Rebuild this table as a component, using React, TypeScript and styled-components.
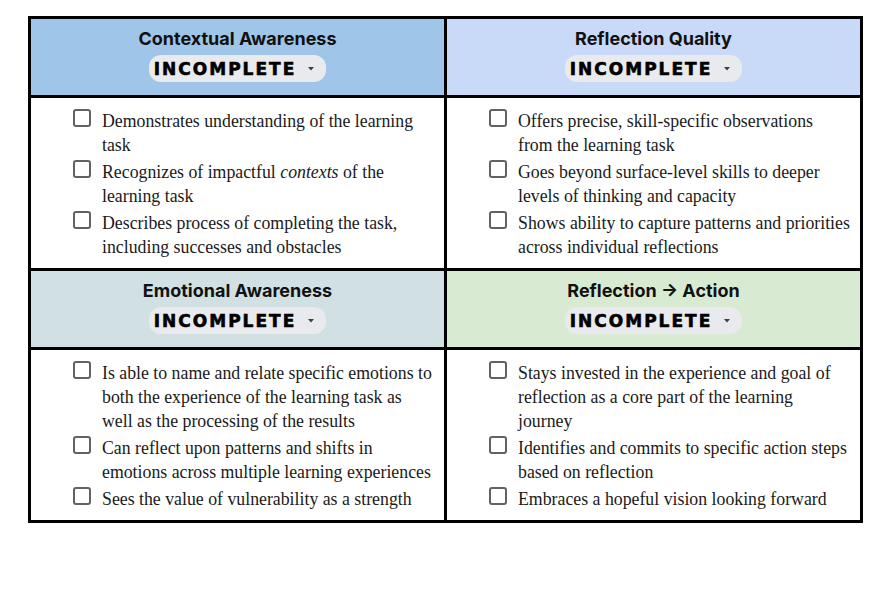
import React from "react";
import styled, { createGlobalStyle } from "styled-components";

const Global = createGlobalStyle`
  html, body { margin: 0; padding: 0; background: #ffffff; }
  body { font-family: "Liberation Serif", "Times New Roman", serif; }
`;

const Page = styled.div`
  padding: 16px 0 0 28px;
  width: 894px;
  height: 600px;
  box-sizing: border-box;
`;

const Grid = styled.div`
  display: grid;
  grid-template-columns: 413px 413px;
  gap: 3px;
  padding: 3px;
  background: #000000;
  width: 835px;
  box-sizing: border-box;
`;

const Header = styled.div<{ $bg: string }>`
  background: ${(p) => p.$bg};
  height: 76px;
  box-sizing: border-box;
  padding-top: 10px;
  display: flex;
  flex-direction: column;
  align-items: center;
  gap: 6px;
`;

const Title = styled.div`
  font-family: Inter, "Noto Sans", sans-serif;
  font-weight: 700;
  font-size: 18px;
  line-height: 20px;
  color: #111111;
`;

const Badge = styled.div`
  height: 27px;
  box-sizing: border-box;
  background: #e8eaed;
  border-radius: 12px;
  display: flex;
  align-items: center;
  padding: 0 12px 0 5px;
  gap: 12px;
`;

const BadgeText = styled.span`
  font-family: "DejaVu Sans", sans-serif;
  font-weight: 700;
  font-size: 17px;
  letter-spacing: 2px;
  color: #000000;
  -webkit-text-stroke: 0.6px #000;
`;

const Body = styled.div`
  background: #ffffff;
  padding: 11px 9px 9px 42px;
  display: flex;
  flex-direction: column;
  gap: 3px;
`;

const Item = styled.div`
  display: flex;
  align-items: flex-start;
  gap: 11px;
  font-size: 17.8px;
  line-height: 24px;
  color: #1a1a1a;
`;

const Box = styled.span`
  flex: 0 0 auto;
  width: 18px;
  height: 18px;
  box-sizing: border-box;
  border: 2px solid #5f6368;
  border-radius: 3px;
`;

const Text = styled.span`
  flex: 1;
`;

const Caret = () => (
  <svg width="6" height="4" viewBox="0 0 6 4">
    <path d="M0 0 L6 0 L3 3.5 Z" fill="#3c4043" />
  </svg>
);

type Section = { title: React.ReactNode; bg: string; items: React.ReactNode[] };

const top: Section[] = [
  {
    title: "Contextual Awareness",
    bg: "#9fc5e8",
    items: [
      "Demonstrates understanding of the learning task",
      <>
        Recognizes of impactful <i>contexts</i> of the learning task
      </>,
      "Describes process of completing the task, including successes and obstacles",
    ],
  },
  {
    title: "Reflection Quality",
    bg: "#c9daf8",
    items: [
      "Offers precise, skill-specific observations from the learning task",
      "Goes beyond surface-level skills to deeper levels of thinking and capacity",
      "Shows ability to capture patterns and priorities across individual reflections",
    ],
  },
];

const bottom: Section[] = [
  {
    title: "Emotional Awareness",
    bg: "#d0e0e3",
    items: [
      "Is able to name and relate specific emotions to both the experience of the learning task as well as the processing of the results",
      "Can reflect upon patterns and shifts in emotions across multiple learning experiences",
      "Sees the value of vulnerability as a strength",
    ],
  },
  {
    title: "Reflection \u2192 Action",
    bg: "#d9ead3",
    items: [
      "Stays invested in the experience and goal of reflection as a core part of the learning journey",
      "Identifies and commits to specific action steps based on reflection",
      "Embraces a hopeful vision looking forward",
    ],
  },
];

const HeaderCell = ({ s }: { s: Section }) => (
  <Header $bg={s.bg}>
    <Title>{s.title}</Title>
    <Badge>
      <BadgeText>INCOMPLETE</BadgeText>
      <Caret />
    </Badge>
  </Header>
);

const BodyCell = ({ s }: { s: Section }) => (
  <Body>
    {s.items.map((it, i) => (
      <Item key={i}>
        <Box />
        <Text>{it}</Text>
      </Item>
    ))}
  </Body>
);

export default function App() {
  return (
    <Page>
      <Global />
      <Grid>
        {top.map((s, i) => (
          <HeaderCell key={"th" + i} s={s} />
        ))}
        {top.map((s, i) => (
          <BodyCell key={"tb" + i} s={s} />
        ))}
        {bottom.map((s, i) => (
          <HeaderCell key={"bh" + i} s={s} />
        ))}
        {bottom.map((s, i) => (
          <BodyCell key={"bb" + i} s={s} />
        ))}
      </Grid>
    </Page>
  );
}
